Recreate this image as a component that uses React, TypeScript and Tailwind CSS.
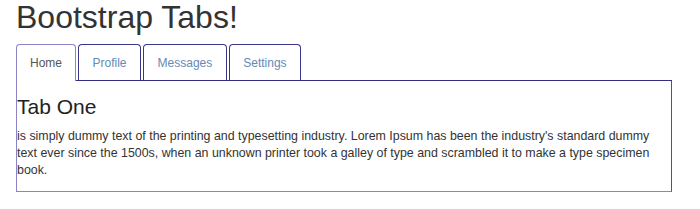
import React from "react";

const tabs = ["Home", "Profile", "Messages", "Settings"];

export default function App() {
  return (
    <div
      className="w-[700px] h-[209px] bg-white px-4 text-[#333]"
      style={{ fontFamily: '"Liberation Sans", Arial, sans-serif' }}
    >
      <h1 className="text-[32px] leading-[35px] text-[#333]">Bootstrap Tabs!</h1>
      <div className="w-[656px] mt-[9px]">
        <ul className="flex gap-[2px] border-b border-[#34307f] h-[37px]">
          {tabs.map((t, i) =>
            i === 0 ? (
              <li
                key={t}
                className="h-[37px] -mb-px flex items-center px-[13px] border border-b-0 border-[#8b84c4] rounded-t-[4px] bg-white text-[12px] text-[#555]"
              >
                {t}
              </li>
            ) : (
              <li
                key={t}
                className="h-[36px] flex items-center px-[13.5px] border border-b-0 border-[#3b3688] rounded-t-[4px] text-[12px] text-[#6689b3]"
              >
                {t}
              </li>
            )
          )}
        </ul>
        <div className="border border-t-0 border-l-[#8b84c4] border-r-[#564c9c] border-b-[#8b84c4] pt-[15px] pb-[2px]">
          <h3 className="text-[21px] leading-[22px] text-[#222]">Tab One</h3>
          <p className="mt-[10px] mb-[10px] text-[12.4px] leading-[17px] text-[#333] pr-[2px]">
            is simply dummy text of the printing and typesetting industry. Lorem Ipsum has been the industry's standard dummy text ever since the 1500s, when an unknown printer took a galley of type and scrambled it to make a type specimen book.
          </p>
        </div>
      </div>
    </div>
  );
}
